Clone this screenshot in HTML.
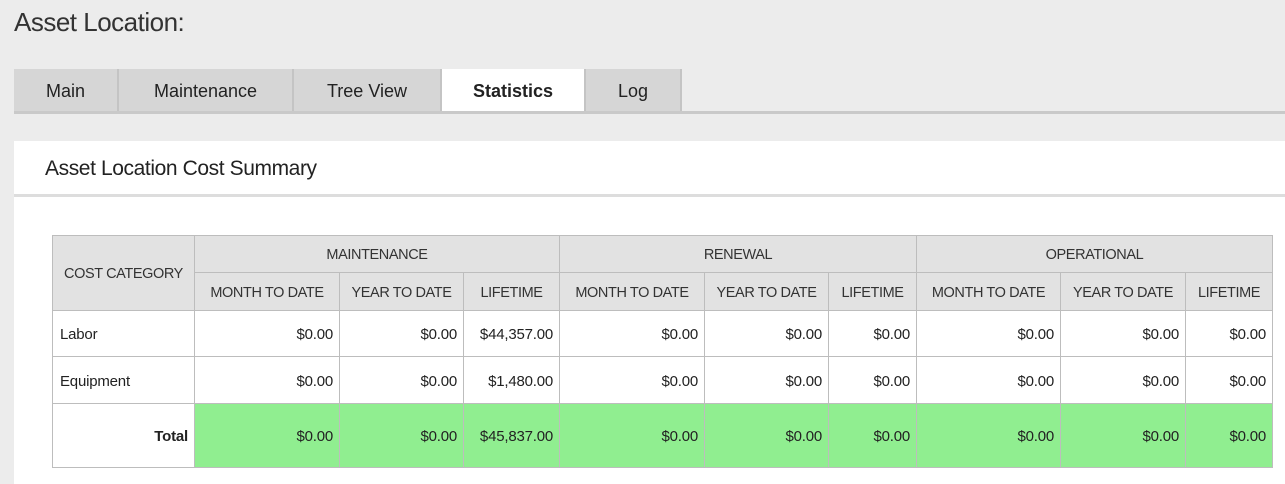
<!DOCTYPE html>
<html><head><meta charset="utf-8"><style>
*{margin:0;padding:0;box-sizing:border-box}
body{width:1285px;height:484px;background:#ececec;font-family:"Liberation Sans",sans-serif;color:#222;position:relative;overflow:hidden}
h1{position:absolute;left:14px;top:7px;font-size:26px;font-weight:normal;color:#333;letter-spacing:-0.5px}
.tab{position:absolute;top:69px;height:42px;background:#d6d6d6;font-size:18px;line-height:44px;text-align:center;color:#222;border-right:2px solid #c4c4c4}
.tab.on{background:#fff;font-weight:bold}
.tline{position:absolute;left:14px;right:0;top:111px;height:3px;background:#c9c9c9}
.panel{position:absolute;left:14px;right:0;top:141px;bottom:0;background:#fff}
.ph{position:absolute;left:31px;top:16px;font-size:21px;color:#222;letter-spacing:-0.4px}
.pl{position:absolute;left:0;right:0;top:53px;height:3px;background:#ddd}
table{position:absolute;left:52px;top:235px;border-collapse:collapse;font-size:14px;table-layout:fixed}
td,th{border:1px solid #bdbdbd;white-space:nowrap;overflow:hidden;padding-top:2px}
th{background:#e2e2e2;font-weight:normal;color:#333;font-size:14.5px;letter-spacing:-0.4px}
td{text-align:right;padding-right:6px;font-size:15px;letter-spacing:-0.2px}
td.l{text-align:left;padding-left:7px}
tr.t td{background:#90ee90}
</style></head><body>
<h1>Asset Location:</h1>
<div class="tab" style="left:14px;width:105px">Main</div>
<div class="tab" style="left:119px;width:175px">Maintenance</div>
<div class="tab" style="left:294px;width:148px">Tree View</div>
<div class="tab on" style="left:442px;width:144px">Statistics</div>
<div class="tab" style="left:586px;width:96px">Log</div>
<div class="tline"></div>
<div class="panel"><div class="ph">Asset Location Cost Summary</div><div class="pl"></div></div>
<table>
<colgroup><col style="width:142px"><col style="width:145px"><col style="width:124px"><col style="width:96px"><col style="width:145px"><col style="width:124px"><col style="width:88px"><col style="width:144px"><col style="width:125px"><col style="width:87px"></colgroup>
<tr style="height:37px"><th rowspan="2">COST CATEGORY</th><th colspan="3">MAINTENANCE</th><th colspan="3">RENEWAL</th><th colspan="3">OPERATIONAL</th></tr>
<tr style="height:38px"><th>MONTH TO DATE</th><th>YEAR TO DATE</th><th>LIFETIME</th><th>MONTH TO DATE</th><th>YEAR TO DATE</th><th>LIFETIME</th><th>MONTH TO DATE</th><th>YEAR TO DATE</th><th>LIFETIME</th></tr>
<tr style="height:46px"><td class="l">Labor</td><td>$0.00</td><td>$0.00</td><td>$44,357.00</td><td>$0.00</td><td>$0.00</td><td>$0.00</td><td>$0.00</td><td>$0.00</td><td>$0.00</td></tr>
<tr style="height:47px"><td class="l">Equipment</td><td>$0.00</td><td>$0.00</td><td>$1,480.00</td><td>$0.00</td><td>$0.00</td><td>$0.00</td><td>$0.00</td><td>$0.00</td><td>$0.00</td></tr>
<tr class="t" style="height:64px"><td style="background:#fff;font-weight:bold">Total</td><td>$0.00</td><td>$0.00</td><td>$45,837.00</td><td>$0.00</td><td>$0.00</td><td>$0.00</td><td>$0.00</td><td>$0.00</td><td>$0.00</td></tr>
</table>
</body></html>
